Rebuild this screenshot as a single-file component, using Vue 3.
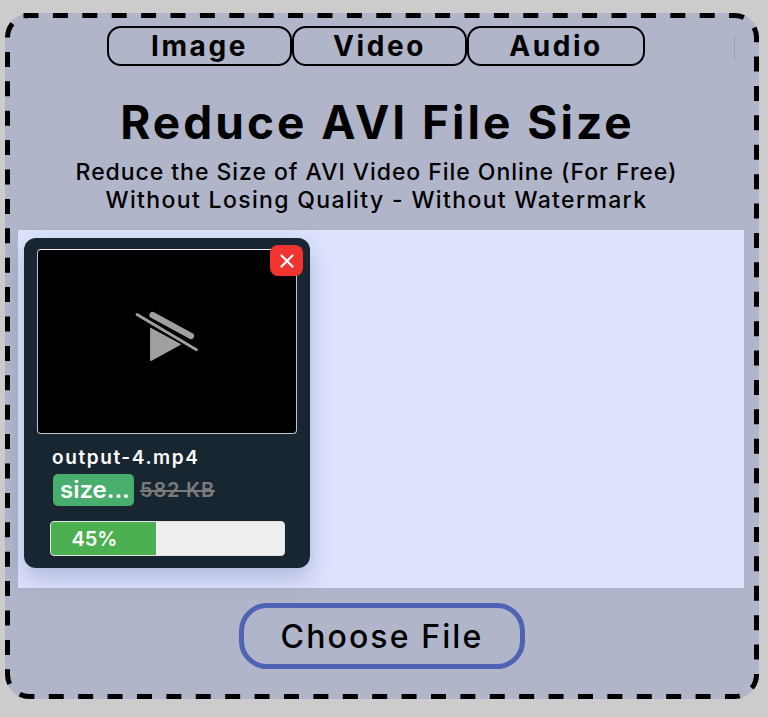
<script setup>
const tabs = ['Image', 'Video', 'Audio']
const progress = 45
</script>

<template>
  <div class="page">
    <main class="panel">
      <svg class="dashes" viewBox="0 0 754 686" aria-hidden="true">
        <path d="M18.5 2.5H729.5A22 22 0 0 1 751.5 24.5V661.5A22 22 0 0 1 729.5 683.5H24.5A22 22 0 0 1 2.5 661.5V24.5A22 22 0 0 1 24.5 2.5Z" />
      </svg>
      <span class="hairline"></span>
      <nav class="tabs">
        <a v-for="tab in tabs" :key="tab" class="tab">{{ tab }}</a>
      </nav>
      <h1>Reduce AVI File Size</h1>
      <p class="sub"><span class="line-one">Reduce the Size of AVI Video File Online (For Free)</span><br /><span class="line-two">Without Losing Quality - Without Watermark</span></p>
      <section class="drop">
        <article class="item">
          <div class="video">
            <svg class="play" viewBox="135 310 64 52" aria-hidden="true">
              <polygon points="150.8,327.5 180,343.3 150.8,359.3" fill="#a0a0a0" stroke="#a0a0a0" stroke-width="1.4" stroke-linejoin="round" />
              <line x1="152.5" y1="314" x2="191" y2="335" stroke="#a0a0a0" stroke-width="6.2" stroke-linecap="round" />
              <line x1="137" y1="313.5" x2="196.5" y2="348.8" stroke="#a0a0a0" stroke-width="2.8" stroke-linecap="round" />
            </svg>
          </div>
          <button class="close" aria-label="Remove">
            <svg viewBox="0 0 14 14" aria-hidden="true"><path d="M1.5 1.5L12.5 12.5M12.5 1.5L1.5 12.5" /></svg>
          </button>
          <div class="name">output-4.mp4</div>
          <div class="sizes">
            <span class="badge">size...</span>
            <span class="old">582 KB</span>
          </div>
          <div class="bar">
            <div class="fill" :style="{ width: progress + '%' }">{{ progress }}%</div>
          </div>
        </article>
      </section>
      <div class="actions">
        <button class="choose">Choose File</button>
      </div>
    </main>
  </div>
</template>

<style>
html, body { margin: 0; background: #cccccc; }
</style>

<style scoped>
.page {
  width: 768px;
  height: 717px;
  box-sizing: border-box;
  padding: 13px 9px 18px 5px;
  background: #cccccc;
  font-family: Inter, "Liberation Sans", sans-serif;
  color: #000;
}
.panel {
  position: relative;
  height: 686px;
  box-sizing: border-box;
  padding: 13px 15px 0 13px;
  background: #b0b5ca;
  border-radius: 25px;
}
.dashes {
  position: absolute;
  inset: 0;
  width: 754px;
  height: 686px;
  pointer-events: none;
}
.dashes path {
  fill: none;
  stroke: #000;
  stroke-width: 5;
  stroke-dasharray: 15 14.4;
}
.hairline {
  position: absolute;
  left: 729px;
  top: 22px;
  width: 1px;
  height: 26px;
  background: #9a9fb4;
}
.tabs {
  display: grid;
  grid-template-columns: 185px 175px 178px;
  width: 538px;
  margin-left: 89px;
}
.tab {
  height: 40px;
  box-sizing: border-box;
  display: flex;
  align-items: center;
  justify-content: center;
  border: 2.5px solid #000;
  border-radius: 14px;
  font-size: 28px;
  font-weight: 700;
  letter-spacing: 2.6px;
}
h1 {
  margin: 26px 0 0;
  padding-right: 7px;
  height: 60px;
  line-height: 60px;
  text-align: center;
  font-size: 46px;
  font-weight: 700;
  letter-spacing: 3px;
}
.sub {
  margin: 6px 0 0;
  padding-right: 9px;
  text-align: center;
  font-size: 23px;
  line-height: 28px;
  font-weight: 500;
}
.line-one { letter-spacing: 0.95px; }
.line-two { letter-spacing: 1.35px; }
.drop {
  height: 358px;
  margin-top: 16px;
  padding: 8px 0 0 6px;
  box-sizing: border-box;
  background: #dde3fd;
}
.item {
  position: relative;
  width: 286px;
  height: 330px;
  box-sizing: border-box;
  padding: 11px 13px 0;
  background: #182632;
  border-radius: 12px;
  box-shadow: 0 10px 22px rgba(60, 70, 130, 0.28);
}
.video {
  width: 260px;
  height: 185px;
  box-sizing: border-box;
  display: flex;
  align-items: center;
  justify-content: center;
  padding-bottom: 10px;
  background: #000;
  border: 1px solid #c4c4c4;
  border-top-color: #f2f2f2;
  border-radius: 4px;
}
.play { width: 64px; height: 52px; }
.close {
  position: absolute;
  top: 7px;
  right: 7px;
  width: 33px;
  height: 31px;
  padding: 0;
  display: flex;
  align-items: center;
  justify-content: center;
  background: #f23430;
  border: 0;
  border-radius: 8px;
}
.close svg { width: 14px; height: 14px; }
.close path { fill: none; stroke: #fff; stroke-width: 2.2; stroke-linecap: round; }
.name {
  margin: 12px 0 0 15px;
  height: 24px;
  line-height: 24px;
  color: #fff;
  font-size: 19px;
  font-weight: 600;
  letter-spacing: 1.6px;
}
.sizes {
  display: flex;
  align-items: center;
  gap: 6px;
  margin: 4px 0 0 16px;
}
.badge {
  width: 81px;
  height: 32px;
  box-sizing: border-box;
  padding-left: 7px;
  line-height: 32px;
  background: #48ae6e;
  border-radius: 5px;
  color: #fff;
  font-size: 24px;
  font-weight: 600;
}
.old {
  color: #7b7b7b;
  font-size: 20px;
  font-weight: 600;
  letter-spacing: 0.8px;
  text-decoration: line-through;
}
.bar {
  width: 235px;
  height: 35px;
  box-sizing: border-box;
  margin: 15px 0 0 13px;
  background: #efefef;
  border: 1px solid #e2e2e2;
  border-radius: 4px;
}
.fill {
  height: 100%;
  box-sizing: border-box;
  padding-right: 18px;
  display: flex;
  align-items: center;
  justify-content: center;
  background: #4caf50;
  border-radius: 3px 0 0 3px;
  color: #fff;
  font-size: 20px;
  font-weight: 600;
}
.actions {
  display: flex;
  justify-content: center;
  margin-top: 15px;
  padding-left: 2px;
}
.choose {
  width: 286px;
  height: 66px;
  box-sizing: border-box;
  background: transparent;
  border: 5px solid #4f63b5;
  border-radius: 28px;
  color: #000;
  font-family: inherit;
  font-size: 32px;
  font-weight: 500;
  letter-spacing: 2.1px;
}
</style>
